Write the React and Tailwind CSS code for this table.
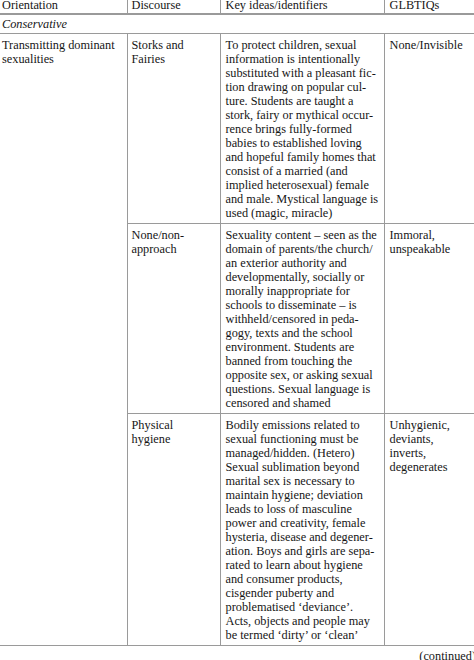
import React from "react";

const rows = [
  {
    discourse: ["Storks and", "Fairies"],
    ideas: [
      "To protect children, sexual",
      "information is intentionally",
      "substituted with a pleasant fic-",
      "tion drawing on popular cul-",
      "ture. Students are taught a",
      "stork, fairy or mythical occur-",
      "rence brings fully-formed",
      "babies to established loving",
      "and hopeful family homes that",
      "consist of a married (and",
      "implied heterosexual) female",
      "and male. Mystical language is",
      "used (magic, miracle)",
    ],
    glbtiq: ["None/Invisible"],
  },
  {
    discourse: ["None/non-", "approach"],
    ideas: [
      "Sexuality content \u2013 seen as the",
      "domain of parents/the church/",
      "an exterior authority and",
      "developmentally, socially or",
      "morally inappropriate for",
      "schools to disseminate \u2013 is",
      "withheld/censored in peda-",
      "gogy, texts and the school",
      "environment. Students are",
      "banned from touching the",
      "opposite sex, or asking sexual",
      "questions. Sexual language is",
      "censored and shamed",
    ],
    glbtiq: ["Immoral,", "unspeakable"],
  },
  {
    discourse: ["Physical", "hygiene"],
    ideas: [
      "Bodily emissions related to",
      "sexual functioning must be",
      "managed/hidden. (Hetero)",
      "Sexual sublimation beyond",
      "marital sex is necessary to",
      "maintain hygiene; deviation",
      "leads to loss of masculine",
      "power and creativity, female",
      "hysteria, disease and degener-",
      "ation. Boys and girls are sepa-",
      "rated to learn about hygiene",
      "and consumer products,",
      "cisgender puberty and",
      "problematised \u2018deviance\u2019.",
      "Acts, objects and people may",
      "be termed \u2018dirty\u2019 or \u2018clean\u2019",
    ],
    glbtiq: ["Unhygienic,", "deviants,", "inverts,", "degenerates"],
  },
];

const Lines = ({ items }) => (
  <>
    {items.map((l, i) => (
      <div key={i} className="whitespace-nowrap">{l}</div>
    ))}
  </>
);

export default function App() {
  return (
    <div
      className="w-[474px] h-[660px] overflow-hidden bg-white text-[#161616] text-[12.3px] leading-[14px]"
      style={{ fontFamily: '"Liberation Serif", "Times New Roman", serif' }}
    >
      <table className="w-[474px] table-fixed border-collapse -mt-[2px]">
        <colgroup>
          <col className="w-[127px]" />
          <col className="w-[93px]" />
          <col className="w-[164px]" />
          <col className="w-[90px]" />
        </colgroup>
        <thead>
          <tr className="border-b-2 border-[#9a9a9a]">
            <th className="text-left font-normal pl-[2px] pt-0 pb-[1px] border-r border-[#9a9a9a]">Orientation</th>
            <th className="text-left font-normal pl-[4px] pt-0 pb-[1px] border-r border-[#9a9a9a]">Discourse</th>
            <th className="text-left font-normal pl-[5px] pt-0 pb-[1px] border-r border-[#9a9a9a]">Key ideas/identifiers</th>
            <th className="text-left font-normal pl-[5px] pt-0 pb-[1px]">GLBTIQs</th>
          </tr>
        </thead>
        <tbody>
          <tr className="border-b border-[#9a9a9a]">
            <td colSpan={4} className="italic pl-[2px] pt-[2px] pb-[2px]">Conservative</td>
          </tr>
          {rows.map((r, i) => (
            <tr key={i} className="border-b border-[#9a9a9a] align-top">
              {i === 0 && (
                <td rowSpan={3} className="pl-[2px] pt-[4px] pb-[3px] border-r border-[#9a9a9a]">
                  <Lines items={["Transmitting dominant", "sexualities"]} />
                </td>
              )}
              <td className="pl-[4px] pt-[4px] pb-[3px] border-r border-[#9a9a9a]">
                <Lines items={r.discourse} />
              </td>
              <td className="pl-[5px] pt-[4px] pb-[3px] border-r border-[#9a9a9a]">
                <Lines items={r.ideas} />
              </td>
              <td className="pl-[5px] pt-[4px] pb-[3px]">
                <Lines items={r.glbtiq} />
              </td>
            </tr>
          ))}
        </tbody>
      </table>
      <div className="text-right pt-[3px] -mr-[2px]">(continued)</div>
    </div>
  );
}
